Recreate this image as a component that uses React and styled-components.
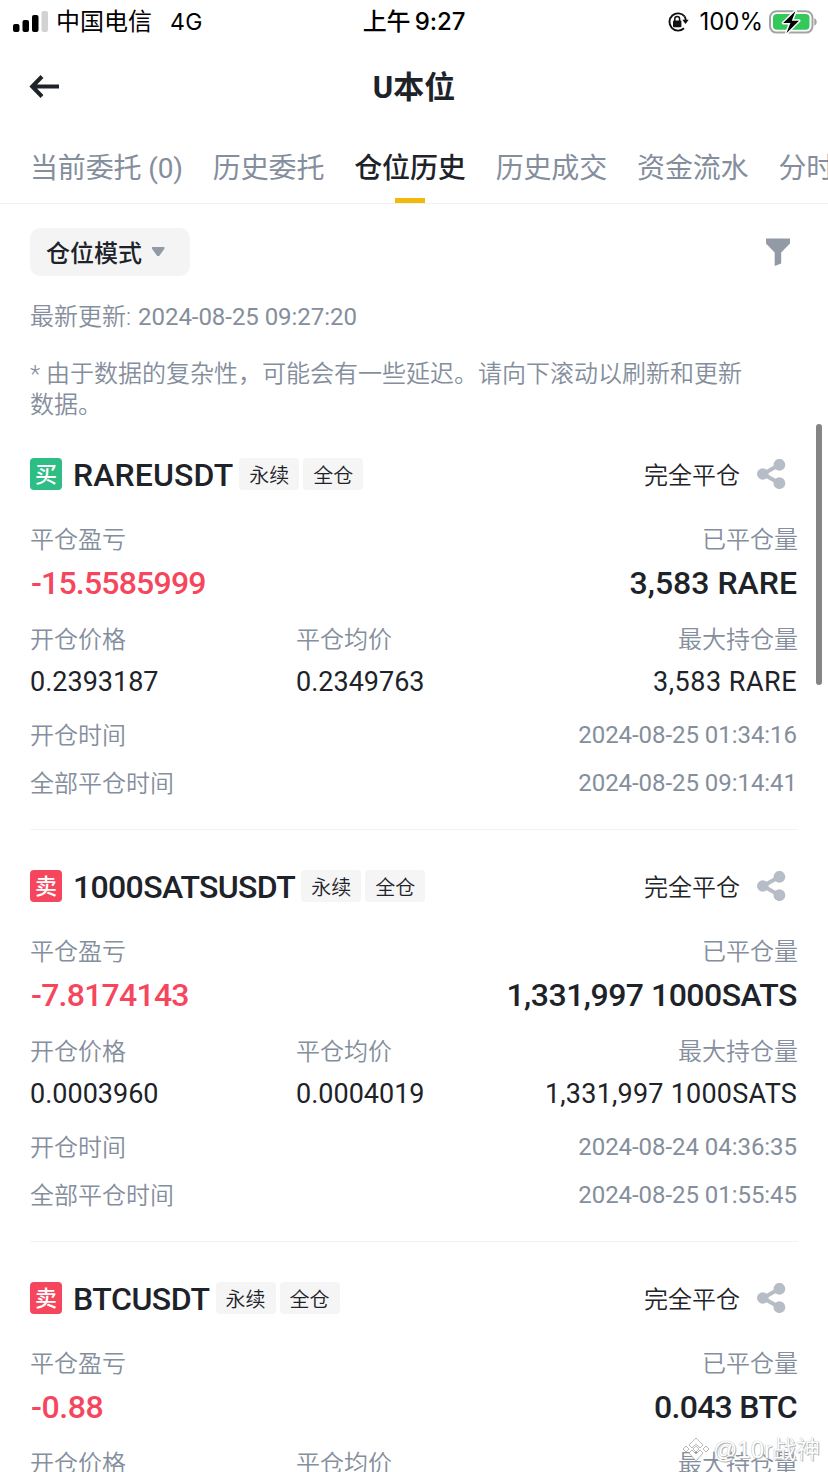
import React from "react";
import styled, { createGlobalStyle } from "styled-components";

const GlobalStyle = createGlobalStyle`
    * {
        box-sizing: border-box;
    }
    body {
        margin: 0;
        background: #fff;
    }
`;

const Page = styled.div`
    position: relative;
    width: 828px;
    height: 1472px;
    overflow: hidden;
    background: #fff;
    color: #1e2329;
    font-family: Roboto, "Noto Sans CJK SC", sans-serif;
    font-size: 24px;
    white-space: nowrap;
`;

const StatusBar = styled.div`
    display: grid;
    grid-template-columns: 1fr auto 1fr;
    height: 41px;
    padding: 0 11px 0 13px;
    align-items: center;
    color: #000;
    font-family: Inter, "Noto Sans CJK SC", sans-serif;
    line-height: 44px;
`;

const StatusGroup = styled.div`
    display: flex;
    align-items: center;
    justify-content: ${props => (props.$end ? "flex-end" : "flex-start")};
`;

const Carrier = styled.span`
    margin-left: 8px;
`;

const Network = styled.span`
    margin-left: 18px;
    font-size: 23px;
    letter-spacing: 0.3px;
`;

const Clock = styled.div`
    font-weight: 500;
    font-size: 24px;
    letter-spacing: -0.1px;
    word-spacing: -2px;
    margin-right: 2px;
`;

const Percent = styled.span`
    margin: 0 6px 0 10px;
    font-size: 24px;
`;

const NavBar = styled.div`
    display: grid;
    grid-template-columns: 1fr auto 1fr;
    align-items: center;
    height: 86px;
    margin-bottom: 1px;
    padding: 0 28px;
`;

const Title = styled.div`
    padding-top: 4px;
    font-size: 31px;
    font-weight: 700;
    line-height: 86px;
`;

const Tabs = styled.div`
    display: flex;
    height: 76px;
    padding-left: 30px;
    gap: 30px;
    border-bottom: 1px solid #f0f1f2;
`;

const Tab = styled.div`
    display: flex;
    flex: none;
    flex-direction: column;
    align-items: center;
    justify-content: space-between;
    font-size: 28px;
    font-weight: ${props => (props.$active ? 500 : 400)};
    line-height: 70px;
    height: 75px;
    padding-top: 6px;
    letter-spacing: -0.15px;
    color: ${props => (props.$active ? "#1e2329" : "#848e9c")};

    &::after {
        content: "";
        flex: none;
        width: 30px;
        height: 5px;
        margin-top: -6px;
        background: ${props => (props.$active ? "#f0b90b" : "transparent")};
    }
`;

const Toolbar = styled.div`
    display: flex;
    align-items: center;
    justify-content: space-between;
    height: 48px;
    margin: 24px 38px 0 30px;
`;

const ModeButton = styled.div`
    display: flex;
    align-items: center;
    gap: 9px;
    width: 160px;
    height: 48px;
    padding-left: 16px;
    border-radius: 10px;
    background: #f4f4f4;
`;

const ModeText = styled.span`
    padding-top: 4px;
    font-weight: 500;
    line-height: 44px;
`;

const Updated = styled.div`
    height: 32px;
    margin: 25px 30px 0;
    color: #848e9c;
    font-weight: 350;
    line-height: 33px;
    word-spacing: 1.2px;
`;

const Note = styled.div`
    margin: 26px 30px 37px;
    color: #848e9c;
    font-weight: 350;
    line-height: 31px;
`;

const Card = styled.div`
    height: 372px;
    margin: 0 30px 40px;
    border-bottom: 1px solid #f2f3f4;
`;

const CardHead = styled.div`
    display: flex;
    align-items: center;
    height: 32px;
    line-height: 32px;
    margin-bottom: 33px;
`;

const Side = styled.span`
    width: 32px;
    height: 32px;
    border-radius: 4px;
    background: ${props => (props.$buy ? "#2ebd85" : "#f6465d")};
    color: #fff;
    font-size: 22px;
    font-weight: 500;
    line-height: 33px;
    text-align: center;
`;

const Symbol = styled.span`
    margin: 1px 6px 0 11px;
    font-size: 32px;
    font-weight: 500;
    letter-spacing: ${props => props.$spacing}px;
`;

const Tag = styled.span`
    width: 60px;
    height: 32px;
    margin-right: 4px;
    border-radius: 4px;
    background: #f5f5f5;
    font-size: 20px;
    font-weight: 350;
    line-height: 37px;
    text-align: center;
`;

const State = styled.span`
    height: 32px;
    margin: 0 17px 0 auto;
    font-weight: 350;
    line-height: 37px;
`;

const Row = styled.div`
    display: grid;
    grid-template-columns: 266px 1fr auto;
    height: ${props => props.$height || 32}px;
    margin-bottom: ${props => props.$gap}px;
    line-height: ${props => (props.$height || 32) + 2}px;
`;

const Label = styled.span`
    color: #848e9c;
    font-weight: 350;
`;

const Big = styled.span`
    margin: 0 1px;
    color: ${props => (props.$loss ? "#f6465d" : "#1e2329")};
    font-size: 32px;
    font-weight: 500;
    letter-spacing: ${props => props.$spacing || 0}px;
    line-height: 40px;
`;

const Num = styled.span`
    margin-right: 1px;
    font-size: 27px;
    letter-spacing: ${props => props.$spacing || 0}px;
`;

const Time = styled.span`
    margin-right: 1px;
    color: #848e9c;
    font-size: 24px;
    font-weight: 400;
    letter-spacing: -0.05px;
    line-height: 32px;
    word-spacing: 0;
`;

const ScrollThumb = styled.div`
    position: absolute;
    top: 424px;
    right: 6px;
    width: 6px;
    height: 261px;
    border-radius: 3px;
    background: #858585;
`;

const Watermark = styled.div`
    position: absolute;
    right: 8px;
    bottom: 6px;
    display: flex;
    align-items: center;
    gap: 3px;
    height: 32px;
    color: #fff;
    font-family: "Liberation Sans", "Noto Sans CJK SC", sans-serif;
    font-size: 24px;
    font-weight: 350;
    line-height: 32px;
    text-shadow: 0 0 1px #999, 1px 1px 0 #bbb;
`;

const SignalIcon = () => (
    <svg width="35" height="22" viewBox="0 0 35 22">
        <rect x="0" y="13" width="6.5" height="8" rx="2" fill="#000" />
        <rect x="9.5" y="9" width="6.5" height="12" rx="2" fill="#000" />
        <rect x="19" y="4" width="6.5" height="17" rx="2" fill="#000" />
        <rect x="28.5" y="0" width="6.5" height="21" rx="2" fill="#d2d2d2" />
    </svg>
);

const LockIcon = () => (
    <svg width="22" height="22" viewBox="0 0 22 22">
        <path d="M17.6 5.4A8.6 8.6 0 1 0 17 17.2" fill="none" stroke="#111" strokeWidth="1.9" />
        <path d="M17.6 5.4A8.6 8.6 0 0 1 18.7 9" fill="none" stroke="#111" strokeWidth="1.9" />
        <path d="M15.3 8.7h6.4l-3.2 4.3z" fill="#111" />
        <rect x="6" y="9.6" width="8.4" height="6.6" rx="1" fill="#111" />
        <path d="M7.8 10V7.8a2.4 2.4 0 0 1 4.8 0V10" fill="none" stroke="#111" strokeWidth="1.5" />
    </svg>
);

const BatteryIcon = () => (
    <svg width="48" height="24" viewBox="0 0 48 24">
        <rect x="1" y="1.2" width="42.5" height="21.4" rx="6.5" fill="#fff" stroke="#a3a3a3" strokeWidth="2" />
        <path d="M45.3 8.3c3.2 1.2 3.2 6 0 7.2z" fill="#a3a3a3" />
        <rect x="4" y="4" width="36.5" height="15.8" rx="4" fill="#34c759" />
        <path
            d="M26.5 1 14.2 13h7.2l-4 10.2L30 10.8h-7.2z"
            fill="#000"
            stroke="#fff"
            strokeWidth="3"
            strokeLinejoin="round"
            paintOrder="stroke"
        />
    </svg>
);

const BackIcon = () => (
    <svg width="32" height="26" viewBox="0 0 32 26">
        <path d="M31 13.5H5M14 3.5 4.2 13.5 14 23.5" fill="none" stroke="#1e2329" strokeWidth="4" />
    </svg>
);

const CaretIcon = () => (
    <svg width="14" height="10" viewBox="0 0 14 10">
        <path d="M1 0h12.4v1.8L8.2 9H6.2L1 1.8z" fill="#929aa5" />
    </svg>
);

const FilterIcon = () => (
    <svg width="24" height="28" viewBox="0 0 24 28">
        <path d="M0 .5h24v5l-8.8 9v11L8.7 28V14.5L0 5.5z" fill="#929aa5" />
    </svg>
);

const ShareIcon = () => (
    <svg width="41" height="30" viewBox="0 0 41 30">
        <path d="M22 6 6 15l16 9" fill="none" stroke="#b7bdc6" strokeWidth="4" />
        <circle cx="5.8" cy="15" r="5.8" fill="#b7bdc6" />
        <circle cx="22.4" cy="5.8" r="5.9" fill="#b7bdc6" />
        <circle cx="22.4" cy="24.2" r="5.9" fill="#b7bdc6" />
    </svg>
);

const WatermarkLogo = () => (
    <svg width="28" height="26" viewBox="0 0 28 26">
        <g fill="#fff" stroke="#aaa" strokeWidth="0.8">
            <path d="m7 8 7-7 7 7-3 3-4-4-4 4z" />
            <path d="m1 12 3-3 3 3-3 3zM21 12l3-3 3 3-3 3zM11 12l3-3 3 3-3 3z" />
            <path d="m7 16 3-3 4 4 4-4 3 3-7 8z" />
        </g>
    </svg>
);

const tabs = ["当前委托 (0)", "历史委托", "仓位历史", "历史成交", "资金流水", "分时"];

const positions = [
    {
        symbol: "RAREUSDT",
        symbolSpacing: 0.1,
        buy: true,
        pnl: "-15.5585999",
        pnlSpacing: -0.8,
        closed: "3,583 RARE",
        closedSpacing: 0,
        entry: "0.2393187",
        exit: "0.2349763",
        max: "3,583 RARE",
        maxSpacing: 0.5,
        opened: "2024-08-25 01:34:16",
        closedAt: "2024-08-25 09:14:41"
    },
    {
        symbol: "1000SATSUSDT",
        symbolSpacing: -0.65,
        pnl: "-7.8174143",
        pnlSpacing: -0.75,
        closed: "1,331,997 1000SATS",
        closedSpacing: -0.5,
        entry: "0.0003960",
        exit: "0.0004019",
        max: "1,331,997 1000SATS",
        maxSpacing: 0.22,
        opened: "2024-08-24 04:36:35",
        closedAt: "2024-08-25 01:55:45"
    },
    {
        symbol: "BTCUSDT",
        symbolSpacing: -0.45,
        pnl: "-0.88",
        pnlSpacing: -0.4,
        closed: "0.043 BTC",
        closedSpacing: -0.7
    }
];

const Position = ({ item }) => (
    <Card>
        <CardHead>
            <Side $buy={item.buy}>{item.buy ? "买" : "卖"}</Side>
            <Symbol $spacing={item.symbolSpacing}>{item.symbol}</Symbol>
            <Tag>永续</Tag>
            <Tag>全仓</Tag>
            <State>完全平仓</State>
            <ShareIcon />
        </CardHead>
        <Row $gap={8}>
            <Label>平仓盈亏</Label>
            <span />
            <Label>已平仓量</Label>
        </Row>
        <Row $height={40} $gap={20}>
            <Big $loss $spacing={item.pnlSpacing}>{item.pnl}</Big>
            <span />
            <Big $spacing={item.closedSpacing}>{item.closed}</Big>
        </Row>
        <Row $gap={10}>
            <Label>开仓价格</Label>
            <Label>平仓均价</Label>
            <Label>最大持仓量</Label>
        </Row>
        {item.entry && (
            <>
                <Row $gap={22}>
                    <Num>{item.entry}</Num>
                    <Num>{item.exit}</Num>
                    <Num $spacing={item.maxSpacing}>{item.max}</Num>
                </Row>
                <Row $gap={16}>
                    <Label>开仓时间</Label>
                    <span />
                    <Time>{item.opened}</Time>
                </Row>
                <Row $gap={0}>
                    <Label>全部平仓时间</Label>
                    <span />
                    <Time>{item.closedAt}</Time>
                </Row>
            </>
        )}
    </Card>
);

const App = () => {
    return (
        <Page>
            <GlobalStyle />
            <StatusBar>
                <StatusGroup>
                    <SignalIcon />
                    <Carrier>中国电信</Carrier>
                    <Network>4G</Network>
                </StatusGroup>
                <Clock>上午 9:27</Clock>
                <StatusGroup $end>
                    <LockIcon />
                    <Percent>100%</Percent>
                    <BatteryIcon />
                </StatusGroup>
            </StatusBar>
            <NavBar>
                <BackIcon />
                <Title>U本位</Title>
            </NavBar>
            <Tabs>
                {tabs.map(tab => (
                    <Tab key={tab} $active={tab === "仓位历史"}>
                        {tab}
                    </Tab>
                ))}
            </Tabs>
            <Toolbar>
                <ModeButton>
                    <ModeText>仓位模式</ModeText>
                    <CaretIcon />
                </ModeButton>
                <FilterIcon />
            </Toolbar>
            <Updated>
                最新更新: <Time>2024-08-25 09:27:20</Time>
            </Updated>
            <Note>
                * 由于数据的复杂性，可能会有一些延迟。请向下滚动以刷新和更新
                <br />
                数据。
            </Note>
            {positions.map(item => (
                <Position key={item.symbol} item={item} />
            ))}
            <ScrollThumb />
            <Watermark>
                <WatermarkLogo />
                @10r战神
            </Watermark>
        </Page>
    );
};

export default App;
